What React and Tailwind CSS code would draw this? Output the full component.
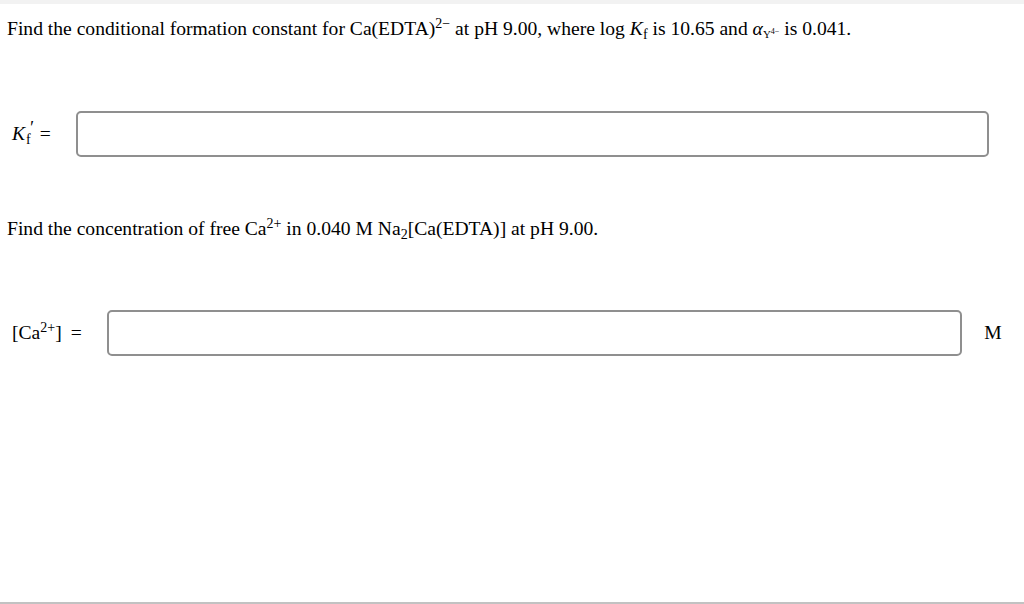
import React from 'react';

const serif = { fontFamily: '"Liberation Serif", "Times New Roman", serif' };

function AnswerBox() {
  return <div className="h-[46px] flex-1 rounded-[5px] border-2 border-[#8f8f8f] bg-white" />;
}

export default function App() {
  return (
    <div className="w-[1024px] h-[604px] bg-white text-black flex flex-col text-[19.6px]" style={serif}>
      <div className="h-[4px] bg-[#f2f2f2]" />
      <div className="flex-1 flex flex-col">
        <p className="pl-[7px] pt-[13px] h-[37px] leading-[24px]">
          Find the conditional formation constant for Ca(EDTA)<sup className="text-[14px] leading-none">2−</sup> at pH 9.00, where log{' '}
          <i>K</i><sub className="text-[14px] leading-none">f</sub> is 10.65 and <i>α</i>
          <sub className="text-[11px] leading-none">Y<sup className="text-[8px] leading-none">4−</sup></sub>{' '}
          is 0.041.
        </p>

        <div className="flex items-center pl-[12px] pr-[35px] mt-[70px]">
          <span className="w-[64px] shrink-0 leading-[24px]">
            <i>K</i>
            <sub className="relative text-[14px] leading-none ml-[1px]">
              <i className="absolute left-[3px] -top-[13px] text-[18px]">′</i>f
            </sub>
            <span className="ml-[9px]">=</span>
          </span>
          <AnswerBox />
        </div>

        <p className="pl-[7px] mt-[60px] h-[24px] leading-[24px]">
          Find the concentration of free Ca<sup className="text-[14px] leading-none">2+</sup> in 0.040 M Na<sub className="text-[14px] leading-none">2</sub>[Ca(EDTA)] at pH 9.00.
        </p>

        <div className="flex items-center pl-[12px] mt-[69px]">
          <span className="w-[95px] shrink-0">
            [Ca<sup className="text-[14px] leading-none">2+</sup>]<span className="ml-[9px]">=</span>
          </span>
          <AnswerBox />
          <span className="w-[62px] shrink-0 text-center">M</span>
        </div>
      </div>
      <div className="h-[2px] bg-[#c2c2c2]" />
    </div>
  );
}
